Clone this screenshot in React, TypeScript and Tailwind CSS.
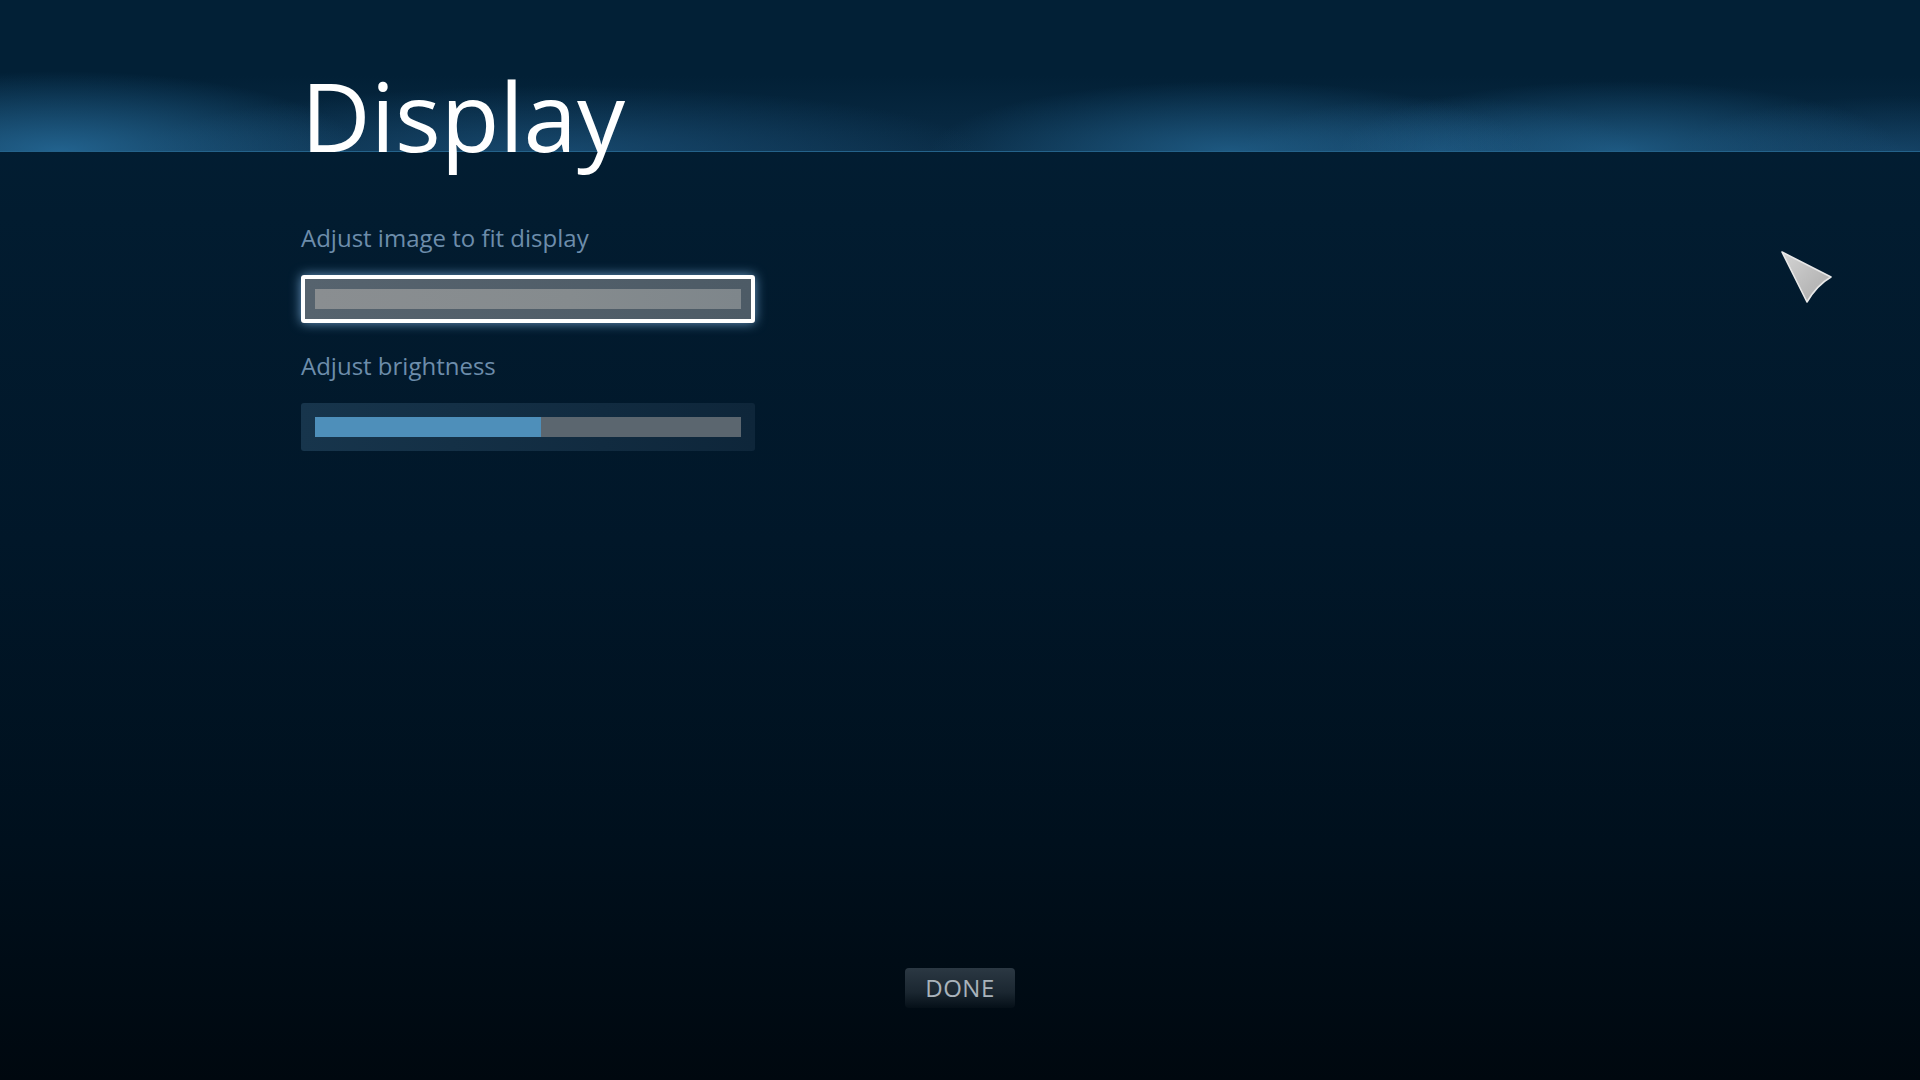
import React from "react";

const Cursor = () => (
  <svg width="60" height="60" viewBox="0 0 60 60" className="absolute left-[1778px] top-[248px]">
    <defs>
      <linearGradient id="cur" x1="0" y1="0" x2="1" y2="1">
        <stop offset="0" stopColor="#d4d4d4" />
        <stop offset="1" stopColor="#a9a9a9" />
      </linearGradient>
    </defs>
    <path d="M4 4 L53 29 Q39 37 29 54 Z" fill="url(#cur)" stroke="#e8e8e8" strokeWidth="1.6" strokeLinejoin="round" />
  </svg>
);

export default function App() {
  return (
    <div className="relative w-full h-screen overflow-hidden font-['Open_Sans',sans-serif] bg-[linear-gradient(180deg,#022036_0%,#021c30_20%,#011729_50%,#00101d_78%,#00080f_100%)] flex flex-col">
      {/* header band with glow */}
      <div className="h-[152px] shrink-0 pt-[67px] pl-[301px] border-b border-[#24628a] bg-[radial-gradient(ellipse_300px_80px_at_60px_100%,rgba(40,112,160,0.8),transparent),radial-gradient(ellipse_420px_65px_at_560px_100%,rgba(36,100,148,0.5),transparent),radial-gradient(ellipse_300px_70px_at_1230px_100%,rgba(40,112,160,0.65),transparent),radial-gradient(ellipse_280px_70px_at_1620px_100%,rgba(40,112,160,0.65),transparent),radial-gradient(ellipse_200px_55px_at_1440px_100%,rgba(36,100,148,0.4),transparent),radial-gradient(ellipse_220px_55px_at_1900px_100%,rgba(36,100,148,0.4),transparent),linear-gradient(180deg,#022036_0%,#022036_50%,#0a2c46_100%)]">
        <h1 className="text-[96px] leading-none text-white font-normal">Display</h1>
      </div>

      <div className="pl-[301px] mt-[70px] flex flex-col">
        <div className="text-[24px] leading-[32px] text-[#6d8dab]">Adjust image to fit display</div>
        <div className="mt-[21px] w-[454px] h-[48px] rounded-[3px] border-4 border-white bg-[linear-gradient(90deg,#56636e,#4d5b66)] px-[10px] py-[10px] shadow-[0_0_12px_rgba(150,205,255,0.7)]">
          <div className="h-[20px] w-full bg-[linear-gradient(90deg,#8a8e91,#858b8e_60%,#7e868b)]" />
        </div>

        <div className="mt-[27px] text-[24px] leading-[32px] text-[#6d8dab]">Adjust brightness</div>
        <div className="mt-[21px] w-[454px] h-[48px] rounded-[3px] bg-[linear-gradient(90deg,#17354c,#0e263a)] px-[14px] py-[14px]">
          <div className="h-[20px] w-full flex bg-[#5b666f]">
            <div className="h-full w-[53%] bg-[#4e8fba]" />
          </div>
        </div>
      </div>

      <div className="flex-1" />

      <button className="self-center mb-[72px] w-[110px] h-[40px] rounded-[4px] bg-[linear-gradient(180deg,#2b3843_0%,#1b2731_60%,rgba(12,22,30,0.4)_100%)] text-[24px] leading-none text-[#a9b3bb] tracking-[0.5px]">
        DONE
      </button>

      <Cursor />
    </div>
  );
}
